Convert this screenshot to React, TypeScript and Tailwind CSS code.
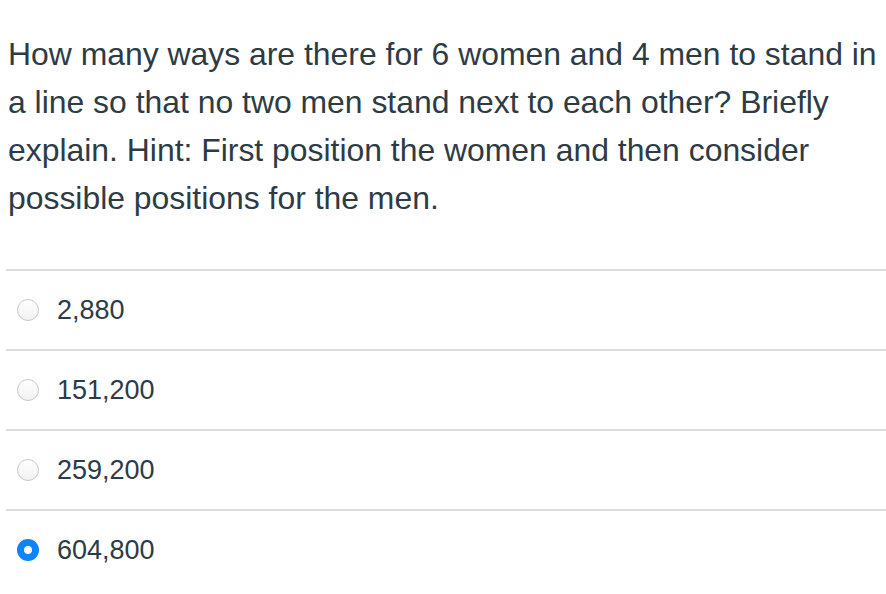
const options = [
  { label: "2,880", checked: false },
  { label: "151,200", checked: false },
  { label: "259,200", checked: false },
  { label: "604,800", checked: true },
]

function Radio({ checked }: { checked: boolean }) {
  if (checked) {
    return (
      <span className="flex h-[22px] w-[22px] shrink-0 items-center justify-center rounded-full bg-[#0a84ff]">
        <span className="h-[8px] w-[8px] rounded-full bg-white" />
      </span>
    )
  }
  return (
    <span className="h-[22px] w-[22px] shrink-0 rounded-full border border-[#c8c8c8] bg-gradient-to-b from-white to-[#f2f2f2]" />
  )
}

export default function App() {
  return (
    <div className="min-h-[594px] w-[886px] bg-white pt-[30px] font-['Liberation_Sans',Arial,sans-serif] text-[#2d3b45]">
      <p className="whitespace-nowrap pl-[8px] text-[31.9px] leading-[48px]">
        How many ways are there for 6 women and 4 men to stand in
        <br />
        a line so that no two men stand next to each other? Briefly
        <br />
        explain. Hint: First position the women and then consider
        <br />
        possible positions for the men.
      </p>
      <div className="ml-[6px] mt-[47px]">
        {options.map((o) => (
          <div key={o.label} className="flex h-[80px] items-center gap-[18px] border-t-2 border-[#dcdcdc] pl-[11px]">
            <Radio checked={o.checked} />
            <span className="text-[27px]">{o.label}</span>
          </div>
        ))}
      </div>
    </div>
  )
}
